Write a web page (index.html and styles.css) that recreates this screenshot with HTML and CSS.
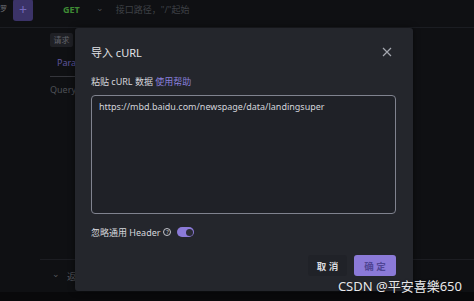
FILE: index.html
```html
<!DOCTYPE html>
<html lang="zh-CN">
<head>
  <meta charset="UTF-8" />
  <title>导入 cURL</title>
  <link rel="stylesheet" href="styles.css">
</head>
<body>
  <div class="app">
    <div class="topbar">
      <span class="cut-char">罗</span>
      <button class="add-button">+</button>
      <span class="method">GET</span>
      <span class="method-arrow">⌄</span>
      <span class="path-input">接口路径，"/"起始</span>
    </div>

    <div class="workspace">
      <div class="req-chip">请求</div>
      <div class="tabs">
        <div class="tab active">Params</div>
      </div>
      <div class="query-label">Query</div>
      <div class="spacer"></div>
      <div class="response-bar">
        <span class="collapse-arrow">⌄</span>
        <span>返回</span>
      </div>
    </div>
    <div class="bottom-strip"></div>
  </div>

  <!-- Import cURL dialog -->
  <div class="modal">
    <div class="modal-content">
      <div class="modal-header">
        <div class="modal-title">导入 cURL</div>
        <svg class="close-icon" width="10" height="10" viewBox="0 0 10 10">
          <path d="M1 1 L9 9 M9 1 L1 9" stroke="#a3a6ae" stroke-width="1.2" fill="none" />
        </svg>
      </div>

      <div class="field-label">粘贴 cURL 数据 <a class="help-link">使用帮助</a></div>
      <div class="curl-box">https://mbd.baidu.com/newspage/data/landingsuper</div>

      <div class="option-row">
        <span>忽略通用 Header</span>
        <span class="help-icon">?</span>
        <span class="toggle"><span class="toggle-knob"></span></span>
      </div>

      <div class="modal-buttons">
        <button class="modal-button cancel">取 消</button>
        <button class="modal-button confirm">确 定</button>
      </div>
    </div>
  </div>

  <div class="watermark">CSDN @平安喜樂650</div>
</body>
</html>
```

FILE: styles.css
```css
* {
  margin: 0;
  padding: 0;
  box-sizing: border-box;
  font-family: "Noto Sans", "Noto Sans CJK SC", sans-serif;
}

body {
  width: 474px;
  height: 301px;
  overflow: hidden;
  background-color: #0f1013;
  position: relative;
}

.app {
  display: flex;
  flex-direction: column;
  height: 301px;
}

/* top bar behind the dialog */
.topbar {
  height: 28px;
  border-bottom: 1px solid #1b1d22;
  display: flex;
  align-items: center;
  font-size: 9px;
  color: #45474d;
}

.cut-char {
  margin-left: 0;
  margin-top: -12px;
  width: 8px;
  font-size: 7px;
  color: #6a6c72;
}

.add-button {
  width: 20px;
  height: 22px;
  margin-left: 5px;
  margin-top: -7px;
  border: none;
  border-radius: 3px;
  background-color: #3b3368;
  color: #7468bc;
  font-size: 14px;
  line-height: 20px;
}

.method {
  margin-left: 30px;
  margin-top: -8px;
  color: #3e8a34;
  font-weight: bold;
}

.method-arrow {
  margin-left: 16px;
  margin-top: -12px;
  color: #4a4c52;
}

.path-input {
  margin-left: 12px;
  margin-top: -8px;
  color: #3e4046;
}

.workspace {
  flex: 1;
  display: flex;
  flex-direction: column;
  padding-left: 50px;
  font-size: 9px;
}

.req-chip {
  margin-top: 5px;
  width: 23px;
  height: 14px;
  background-color: #1f2025;
  color: #60626a;
  font-size: 8px;
  line-height: 14px;
  text-align: center;
  border-radius: 2px;
}

.tabs {
  margin-top: 9px;
  border-bottom: 1px solid #34353b;
  width: 28px;
  height: 21px;
}

.tab {
  margin-left: 7px;
  color: #5e559e;
  line-height: 13px;
  white-space: nowrap;
}

.query-label {
  margin-top: 6px;
  color: #4e5056;
  line-height: 13px;
}

.spacer {
  flex: 1;
}

.response-bar {
  margin-left: -10px;
  border-top: 1px solid #1c1d22;
  height: 33px;
  display: flex;
  align-items: center;
  gap: 7px;
  padding-left: 12px;
  color: #55575d;
}

.collapse-arrow {
  margin-top: -5px;
}

.bottom-strip {
  height: 9px;
  background-color: #09090b;
}

/* dialog */
.modal {
  position: absolute;
  left: 75px;
  top: 28px;
  z-index: 10;
}

.modal-content {
  width: 338px;
  height: 263px;
  background-color: #24262c;
  border-radius: 3px;
  padding: 16px 17px 15px 16px;
  display: flex;
  flex-direction: column;
  box-shadow: 0 0 6px rgba(0, 0, 0, 0.5);
}

.modal-header {
  display: flex;
  justify-content: space-between;
  align-items: center;
  height: 16px;
}

.modal-title {
  font-size: 11px;
  color: #e2e3e7;
}

.close-icon {
  margin-right: 4px;
}

.field-label {
  margin-top: 16px;
  font-size: 9px;
  line-height: 12px;
  color: #d6d7dc;
}

.help-link {
  color: #8a80dc;
}

.curl-box {
  margin-top: 7px;
  height: 119px;
  background-color: #1f2127;
  border: 1px solid #80838f;
  border-radius: 4px;
  padding: 4px 7px;
  font-size: 9px;
  color: #d2d4da;
}

.option-row {
  margin-top: 12px;
  height: 12px;
  display: flex;
  align-items: center;
  font-size: 9px;
  color: #d6d7dc;
}

.help-icon {
  width: 8px;
  height: 8px;
  margin-left: 3px;
  border: 1px solid #c3c5cc;
  border-radius: 50%;
  font-size: 6px;
  line-height: 6px;
  text-align: center;
  color: #c3c5cc;
}

.toggle {
  width: 17px;
  height: 10px;
  margin-left: 6px;
  background-color: #8b7ad8;
  border-radius: 5px;
  display: flex;
  justify-content: flex-end;
  align-items: center;
  padding-right: 1.5px;
}

.toggle-knob {
  width: 7px;
  height: 7px;
  background-color: #2b2c36;
  border-radius: 50%;
}

.modal-buttons {
  margin-top: auto;
  display: flex;
  justify-content: flex-end;
  gap: 7px;
}

.modal-button {
  height: 21px;
  border: none;
  border-radius: 3px;
  font-size: 9.5px;
  font-weight: bold;
}

.cancel {
  width: 39px;
  background-color: #202228;
  color: #d8d9de;
}

.confirm {
  width: 42px;
  background-color: #8b7ad8;
  color: #4f4594;
}

.watermark {
  position: absolute;
  right: 12px;
  bottom: 6px;
  z-index: 20;
  font-size: 13px;
  color: #e8e8ea;
  text-shadow: 0 0 2px rgba(0, 0, 0, 0.6);
}
```
